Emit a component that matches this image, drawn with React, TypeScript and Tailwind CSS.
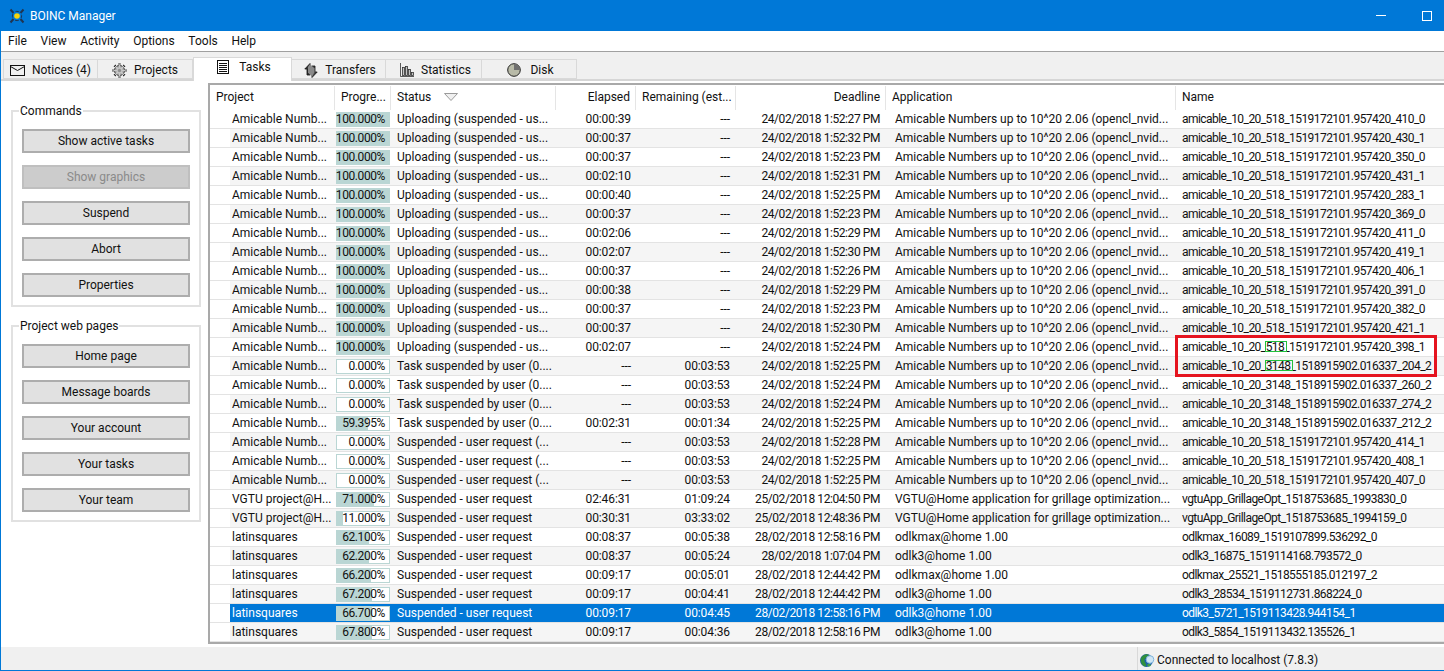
import React from "react";

type Row = [string, number, string, string, string, string, string, string];
const AM = "Amicable Numb...";
const AP = "Amicable Numbers up to 10^20 2.06  (opencl_nvid...";
const UP = "Uploading (suspended - us...";
const TS = "Task suspended by user (0....";
const SS = "Suspended - user request (...";
const SU = "Suspended - user request";
const VG = "VGTU project@H...";
const VA = "VGTU@Home application for grillage optimization...";
const LS = "latinsquares";
const D = "---";
const rows: Row[] = [
  [AM, 100, UP, "00:00:39", D, "24/02/2018 1:52:27 PM", AP, "amicable_10_20_518_1519172101.957420_410_0"],
  [AM, 100, UP, "00:00:37", D, "24/02/2018 1:52:32 PM", AP, "amicable_10_20_518_1519172101.957420_430_1"],
  [AM, 100, UP, "00:00:37", D, "24/02/2018 1:52:23 PM", AP, "amicable_10_20_518_1519172101.957420_350_0"],
  [AM, 100, UP, "00:02:10", D, "24/02/2018 1:52:31 PM", AP, "amicable_10_20_518_1519172101.957420_431_1"],
  [AM, 100, UP, "00:00:40", D, "24/02/2018 1:52:25 PM", AP, "amicable_10_20_518_1519172101.957420_283_1"],
  [AM, 100, UP, "00:00:37", D, "24/02/2018 1:52:23 PM", AP, "amicable_10_20_518_1519172101.957420_369_0"],
  [AM, 100, UP, "00:02:06", D, "24/02/2018 1:52:29 PM", AP, "amicable_10_20_518_1519172101.957420_411_0"],
  [AM, 100, UP, "00:02:07", D, "24/02/2018 1:52:30 PM", AP, "amicable_10_20_518_1519172101.957420_419_1"],
  [AM, 100, UP, "00:00:37", D, "24/02/2018 1:52:26 PM", AP, "amicable_10_20_518_1519172101.957420_406_1"],
  [AM, 100, UP, "00:00:38", D, "24/02/2018 1:52:29 PM", AP, "amicable_10_20_518_1519172101.957420_391_0"],
  [AM, 100, UP, "00:00:37", D, "24/02/2018 1:52:23 PM", AP, "amicable_10_20_518_1519172101.957420_382_0"],
  [AM, 100, UP, "00:00:37", D, "24/02/2018 1:52:30 PM", AP, "amicable_10_20_518_1519172101.957420_421_1"],
  [AM, 100, UP, "00:02:07", D, "24/02/2018 1:52:24 PM", AP, "amicable_10_20_518_1519172101.957420_398_1"],
  [AM, 0, TS, D, "00:03:53", "24/02/2018 1:52:25 PM", AP, "amicable_10_20_3148_1518915902.016337_204_2"],
  [AM, 0, TS, D, "00:03:53", "24/02/2018 1:52:24 PM", AP, "amicable_10_20_3148_1518915902.016337_260_2"],
  [AM, 0, TS, D, "00:03:53", "24/02/2018 1:52:24 PM", AP, "amicable_10_20_3148_1518915902.016337_274_2"],
  [AM, 59.395, TS, "00:02:31", "00:01:34", "24/02/2018 1:52:25 PM", AP, "amicable_10_20_3148_1518915902.016337_212_2"],
  [AM, 0, SS, D, "00:03:53", "24/02/2018 1:52:28 PM", AP, "amicable_10_20_518_1519172101.957420_414_1"],
  [AM, 0, SS, D, "00:03:53", "24/02/2018 1:52:25 PM", AP, "amicable_10_20_518_1519172101.957420_408_1"],
  [AM, 0, SS, D, "00:03:53", "24/02/2018 1:52:25 PM", AP, "amicable_10_20_518_1519172101.957420_407_0"],
  [VG, 71, SU, "02:46:31", "01:09:24", "25/02/2018 12:04:50 PM", VA, "vgtuApp_GrillageOpt_1518753685_1993830_0"],
  [VG, 11, SU, "00:30:31", "03:33:02", "25/02/2018 12:48:36 PM", VA, "vgtuApp_GrillageOpt_1518753685_1994159_0"],
  [LS, 62.1, SU, "00:08:37", "00:05:38", "28/02/2018 12:58:16 PM", "odlkmax@home 1.00", "odlkmax_16089_1519107899.536292_0"],
  [LS, 62.2, SU, "00:08:37", "00:05:24", "28/02/2018 1:07:04 PM", "odlk3@home 1.00", "odlk3_16875_1519114168.793572_0"],
  [LS, 66.2, SU, "00:09:17", "00:05:01", "28/02/2018 12:44:42 PM", "odlkmax@home 1.00", "odlkmax_25521_1518555185.012197_2"],
  [LS, 67.2, SU, "00:09:17", "00:04:41", "28/02/2018 12:44:42 PM", "odlk3@home 1.00", "odlk3_28534_1519112731.868224_0"],
  [LS, 66.7, SU, "00:09:17", "00:04:45", "28/02/2018 12:58:16 PM", "odlk3@home 1.00", "odlk3_5721_1519113428.944154_1"],
  [LS, 67.8, SU, "00:09:17", "00:04:36", "28/02/2018 12:58:16 PM", "odlk3@home 1.00", "odlk3_5854_1519113432.135526_1"],
];

function Logo() {
  return (
    <svg width="16" height="16" viewBox="0 0 16 16" fill="none">
      <path d="M1.500 1.500 L4.500 5 M14.500 1.500 L11.500 5 M1.500 14.500 L4.500 11 M14.500 14.500 L11.500 11" stroke="#1f3552" strokeWidth="2" />
      <circle cx="8" cy="8" r="4.600" stroke="#1f3552" strokeWidth="1" strokeDasharray="4 3.200" strokeDashoffset="2" />
      <circle cx="8" cy="8" r="2.800" fill="#f7d40a" />
    </svg>
  );
}
function Env() {
  return (
    <svg width="15" height="11" viewBox="0 0 15 11" fill="none" stroke="#111">
      <rect x="0.500" y="0.500" width="14" height="10" />
      <path d="M0.500 1.500 L7.500 5.500 L14.500 1.500" />
    </svg>
  );
}
function Gear() {
  return (
    <svg width="15" height="15" viewBox="0 0 15 15">
      <path d="M7.500 1.500v-1M7.500 14.500v-1M1.500 7.500h-1M14.500 7.500h-1M3.300 3.300l-.8-.8M12.500 12.500l-.8-.8M3.300 11.700l-.8.8M12.500 2.500l-.8.8" stroke="#222" strokeWidth="2.600" />
      <circle cx="7.500" cy="7.500" r="5" fill="#a9a9a9" stroke="#222" />
      <path d="M7.500 1.800v11.400M1.800 7.500h11.400M3.500 3.500l8 8M3.500 11.500l8-8" stroke="#c9c9c9" strokeWidth="1.600" />
      <circle cx="7.500" cy="7.500" r="1.700" fill="#8f8f8f" />
    </svg>
  );
}
function Doc() {
  return (
    <svg width="12" height="14" viewBox="0 0 12 14" fill="none" stroke="#111">
      <rect x="0.500" y="0.500" width="11" height="13" />
      <path d="M2 3.500h8M2 5.500h8M2 7.500h8M2 9.500h8M2 11.500h8" />
    </svg>
  );
}
function Transfer() {
  return (
    <svg width="14" height="15" viewBox="0 0 14 15">
      <path d="M6 0.500 L0.800 6 H3 V12 H6Z" fill="#333" stroke="#111" strokeWidth="0.800" />
      <path d="M8 14.500 L13.200 9 H11 V3 H8Z" fill="#444" stroke="#111" strokeWidth="0.800" />
      <path d="M6 1 L10.500 5.500 V9 L8 14 L4 9.500 V4Z" fill="#8a8a8a" />
    </svg>
  );
}
function Bars() {
  return (
    <svg width="14" height="14" viewBox="0 0 14 14" fill="#c4c4c4" stroke="#333" strokeWidth="0.800">
      <path d="M0.500 0V13.500H14" fill="none" />
      <rect x="2.500" y="4.500" width="2" height="8" />
      <rect x="5.500" y="3.500" width="2" height="9" />
      <rect x="8.500" y="6.500" width="2" height="6" />
      <rect x="11.500" y="9.500" width="2" height="3" />
    </svg>
  );
}
function Pie() {
  return (
    <svg width="14" height="14" viewBox="0 0 14 14">
      <circle cx="7" cy="7" r="6.300" fill="#b8baa8" stroke="#222" />
      <path d="M7 7V1A6 6 0 0 1 13 7Z" fill="#6f6f6f" />
    </svg>
  );
}
function Globe() {
  return (
    <svg width="15" height="15" viewBox="0 0 15 15">
      <circle cx="6.500" cy="7.500" r="6.500" fill="#1d5fa8" />
      <path d="M1 5 C3 1.500 7 0.500 9 2 C7 5 4 5 4.500 8 C5 10 6.500 10 6 13.500 C3 13.500 0 10 1 5Z" fill="#2f8f3e" />
      <path d="M7 12 C8 10 10 10.500 11 12.500 C10 13.800 8 14 7 12Z" fill="#3f9f4c" />
      <circle cx="10" cy="6.500" r="3.800" fill="#cfe6f5" stroke="#7fb4dc" strokeWidth="1" />
    </svg>
  );
}

function Tab({ icon, label, w, active, gap = "gap-[7px]", pad = "" }: { icon: React.ReactNode; label: string; w: string; active?: boolean; gap?: string; pad?: string }) {
  return active ? (
    <div className={`${w} h-[24px] -mb-[2px] bg-white border border-b-0 border-[#d9d9d9] flex items-center justify-center ${gap} ${pad} z-10 relative pb-[5px]`}>
      {icon}
      <span>{label}</span>
    </div>
  ) : (
    <div className={`${w} h-5 border border-l-0 first:border-l border-[#d9d9d9] bg-[#f0f0f0] flex items-center justify-center ${gap} ${pad} pt-[2px]`}>
      {icon}
      <span>{label}</span>
    </div>
  );
}

function Btn({ children, disabled }: { children: string; disabled?: boolean }) {
  return (
    <div className={`h-6 w-[168px] border-2 flex items-center justify-center ${disabled ? "border-[#bfbfbf] bg-[#cccccc] text-[#8a8a8a]" : "border-[#adadad] bg-[#e1e1e1] text-[#111]"}`}>
      {children}
    </div>
  );
}

function Group({ title, items }: { title: string; items: { t: string; d?: boolean }[] }) {
  return (
    <div className="relative w-[190px] border-2 border-[#e1e1e1] px-[9px] pt-[17px] pb-[8px] flex flex-col gap-3">
      <span className="absolute -top-[9px] left-[6px] bg-white px-[1px] leading-4">{title}</span>
      {items.map((i) => (
        <Btn key={i.t} disabled={i.d}>{i.t}</Btn>
      ))}
    </div>
  );
}

function Hd({ w, label, right, last, extra }: { w: string; label: string; right?: boolean; last?: boolean; extra?: React.ReactNode }) {
  return (
    <div className={`${w} shrink-0 h-[24px] flex items-center whitespace-nowrap px-[6px] pb-[2px] ${right ? "justify-end pr-[5px]" : ""} ${last ? "" : "border-r border-[#e5e5e5]"}`}>
      <span>{label}</span>
      {extra}
    </div>
  );
}

function Progress({ v }: { v: number }) {
  const label = v.toFixed(3) + "%";
  return (
    <div className="w-[54px] mx-[1px] h-[15px] shrink-0 border border-[#bad6d4] bg-white relative flex items-center justify-end pr-[4px] text-[#111] tracking-[-0.4px]">
      <div className="absolute left-0 top-0 bottom-0 bg-[#bad6d4]" style={{ width: `${v}%` }} />
      <span className="relative">{label}</span>
    </div>
  );
}

function TaskRow({ r, i }: { r: Row; i: number }) {
  const sel = i === 26;
  const alt = i % 2 === 1;
  const bg = sel ? "bg-[#0078d7] text-white" : alt ? "bg-[#f5f5f5]" : "bg-white";
  const marked = i === 12 || i === 13;
  let name: React.ReactNode = r[7];
  if (marked) {
    const m = r[7].match(/^(amicable_10_20_)(\d+)(_.*)$/)!;
    name = (
      <>
        {m[1]}
        <span className="relative">
          {m[2]}
          <span className="absolute -left-px -right-[3px] top-[1px] bottom-[2px] border border-[#22c03c]" />
        </span>
        {m[3]}
      </>
    );
  }
  return (
    <div className="h-[19px] flex items-stretch border-b border-[#e3e3e3] whitespace-nowrap">
      <div className="w-[20px] shrink-0 bg-white" />
      <div className={`flex-1 flex items-center ${bg}`}>
        <div className="w-[105px] shrink-0 pl-[2px] overflow-hidden">{r[0]}</div>
        <Progress v={r[1]} />
        <div className="w-[165px] shrink-0 pl-[6px] overflow-hidden">{r[2]}</div>
        <div className="w-[80px] shrink-0 pr-[5px] text-right tracking-[-0.1px]">{r[3]}</div>
        <div className="w-[100px] shrink-0 pr-[6px] text-right tracking-[-0.1px]">{r[4]}</div>
        <div className="w-[150px] shrink-0 pr-[6px] text-right tracking-[-0.42px]">{r[5]}</div>
        <div className="w-[290px] shrink-0 pl-[9px] overflow-hidden">{r[6]}</div>
        <div className="flex-1 pl-[6px] overflow-hidden tracking-[-0.56px]">{name}</div>
      </div>
    </div>
  );
}

export default function App() {
  return (
    <div className="w-[1444px] h-[671px] overflow-hidden bg-white flex flex-col text-[12px] leading-4 text-[#111] border-l border-b border-[#0078d7] relative" style={{ fontFamily: 'Roboto, "Noto Sans", sans-serif' }}>
      <div className="h-[31px] bg-[#0078d7] text-white flex items-center pl-[8px] shrink-0">
        <Logo />
        <span className="ml-[5px]">BOINC Manager</span>
        <div className="ml-auto flex items-center gap-[36px] pr-[12px]">
          <div className="w-[10px] h-px bg-white" />
          <div className="w-[10px] h-[10px] border border-white" />
        </div>
      </div>
      <div className="h-[20px] flex items-center gap-[13.700px] pl-[7px] shrink-0">
        {["File", "View", "Activity", "Options", "Tools", "Help"].map((m) => (
          <span key={m}>{m}</span>
        ))}
      </div>
      <div className="h-px bg-[#a0a0a0] shrink-0" />
      <div className="h-[29px] bg-[#f0f0f0] flex items-end pl-[2px] border-b-2 border-[#d6d6d6] shrink-0">
        <Tab icon={<Env />} label="Notices (4)" w="w-[95px]" />
        <Tab icon={<Gear />} label="Projects" w="w-[95px]" />
        <Tab icon={<Doc />} label="Tasks" w="w-[99px]" gap="gap-[10px]" pad="pl-[3px]" active />
        <Tab icon={<Transfer />} label="Transfers" w="w-[94px]" pad="pl-[3px]" />
        <Tab icon={<Bars />} label="Statistics" w="w-[96px]" pad="pl-[4px]" />
        <Tab icon={<Pie />} label="Disk" w="w-[95px]" gap="gap-[9px]" pad="pl-[3px]" />
      </div>
      <div className="flex-1 flex min-h-0">
        <div className="w-[207px] shrink-0 pl-[10px] pt-[29px] flex flex-col gap-[18px]">
          <Group title="Commands" items={[{ t: "Show active tasks" }, { t: "Show graphics", d: true }, { t: "Suspend" }, { t: "Abort" }, { t: "Properties" }]} />
          <Group title="Project web pages" items={[{ t: "Home page" }, { t: "Message boards" }, { t: "Your account" }, { t: "Your tasks" }, { t: "Your team" }]} />
        </div>
        <div className="flex-1 min-w-0 self-start border-l-2 border-t-2 border-b-2 border-[#a9a9a9] mt-[2px] relative">
          <div className="h-[25px] flex items-start pt-px">
            <Hd w="w-[125px]" label="Project" />
            <Hd w="w-[56px]" label="Progre..." />
            <Hd w="w-[165px]" label="Status" extra={<svg className="ml-[13px]" width="14" height="8" viewBox="0 0 14 8"><path d="M0.500 0.500H13.500L7 7.500Z" fill="#f0f0f0" stroke="#9a9a9a" /></svg>} />
            <Hd w="w-[80px]" label="Elapsed" right />
            <Hd w="w-[100px]" label="Remaining (est..." />
            <Hd w="w-[150px]" label="Deadline" right />
            <Hd w="w-[290px]" label="Application" />
            <Hd w="w-[266px]" label="Name" last />
          </div>
          {rows.map((r, i) => (
            <TaskRow key={i} r={r} i={i} />
          ))}
          <div className="absolute left-[965px] top-[250px] w-[262px] h-[42px] border-[3px] border-[#e5141f] pointer-events-none" />
        </div>
      </div>
      <div className="h-[23px] shrink-0 bg-[#f0f0f0] flex items-center pl-[1136px]">
        <div className="h-full border-l border-[#d9d9d9] pl-[2px] pt-[3px] flex items-center gap-[2px]">
          <Globe />
          <span>Connected to localhost (7.8.3)</span>
        </div>
      </div>
    </div>
  );
}
